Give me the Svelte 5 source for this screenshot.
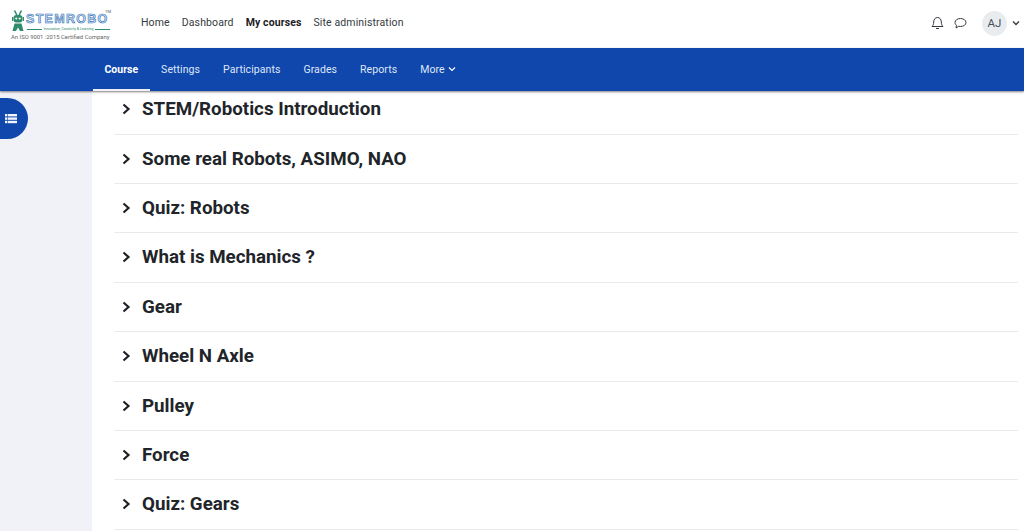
<script>
  const primary = ['Home', 'Dashboard', 'My courses', 'Site administration'];
  const secondary = ['Course', 'Settings', 'Participants', 'Grades', 'Reports'];
  const sections = ['STEM/Robotics Introduction', 'Some real Robots, ASIMO, NAO', 'Quiz: Robots', 'What is Mechanics ?', 'Gear', 'Wheel N Axle', 'Pulley', 'Force', 'Quiz: Gears'];
</script>

<div class="page">
  <header class="top">
    <div class="logo">
      <svg class="robot" viewBox="0 0 12 22" width="12" height="22" aria-hidden="true">
        <path d="M2.500 0.500 4.800 5M9.500 0.500 7.200 5" stroke="#2e8b6b" stroke-width="1.600" fill="none"/>
        <rect x="1.500" y="5" width="9" height="7.500" rx="3" fill="#2e8b6b"/>
        <rect x="0" y="7" width="1.200" height="4" fill="#2e8b6b"/>
        <rect x="10.800" y="7" width="1.200" height="4" fill="#2e8b6b"/>
        <circle cx="4.300" cy="8.500" r="1.100" fill="#fff"/>
        <circle cx="7.700" cy="8.500" r="1.100" fill="#fff"/>
        <path d="M2.500 13.500h7l2 7.500H8L6 17.500 4 21H0.500z" fill="#2e8b6b"/>
      </svg>
      <div class="brand">STEMROBO</div>
      <sup class="tm">TM</sup>
      <div class="tag"><i></i><span>Innovation, Creativity &amp; Learning</span><i></i></div>
      <div class="iso">An ISO 9001 :2015 Certified Company</div>
    </div>
    <nav class="primary">
      {#each primary as p}
        <span class:strong={p === 'My courses'}>{p}</span>
      {/each}
    </nav>
    <div class="tools">
      <svg class="bell" width="13" height="14" viewBox="0 0 13 14" fill="none" stroke="#343a40" stroke-width="1" aria-hidden="true">
        <path d="M1 10.500h11c-1.200-1.300-1.700-2.500-1.700-4.500 0-2.500-1.500-4.500-3.800-4.500S2.700 3.500 2.700 6c0 2-.5 3.200-1.700 4.500z"/>
        <path d="M5 12.500h3"/>
      </svg>
      <svg class="chat" width="13" height="13" viewBox="0 0 13 13" fill="none" stroke="#343a40" stroke-width="1" aria-hidden="true">
        <path d="M6.500 1.500c3 0 5.500 1.700 5.500 4s-2.500 4-5.500 4c-.7 0-1.300-.1-1.900-.2L2 11l.5-2.700C1.500 7.600 1 6.600 1 5.500c0-2.300 2.500-4 5.500-4z"/>
      </svg>
      <div class="avatar">AJ</div>
      <svg class="caret" width="8" height="6" viewBox="0 0 8 6" fill="none" stroke="#343a40" stroke-width="1.300" aria-hidden="true"><path d="M1 1.500 4 4.500 7 1.500"/></svg>
    </div>
  </header>

  <nav class="secondary">
    {#each secondary as s, i}
      <span class="tab" class:active={i === 0}>{s}</span>
    {/each}
    <span class="tab">More
      <svg width="8" height="6" viewBox="0 0 8 6" fill="none" stroke="#fff" stroke-width="1.200" aria-hidden="true"><path d="M1 1.500 4 4.500 7 1.500"/></svg>
    </span>
  </nav>

  <div class="body">
    <aside class="rail">
      <button class="drawer" aria-label="Open course index">
        <svg width="12" height="10" viewBox="0 0 12 10" fill="#f2f5fb" aria-hidden="true">
          <rect x="0" y="0" width="2" height="2.400"/><rect x="2.600" y="0" width="9.400" height="2.400"/>
          <rect x="0" y="3.400" width="2" height="2.400"/><rect x="2.600" y="3.400" width="9.400" height="2.400"/>
          <rect x="0" y="6.800" width="2" height="2.400"/><rect x="2.600" y="6.800" width="9.400" height="2.400"/>
        </svg>
      </button>
    </aside>
    <main class="content">
      {#each sections as s}
        <section class="row">
          <svg width="9" height="12" viewBox="0 0 9 12" fill="none" stroke="#1d2125" stroke-width="2.200" aria-hidden="true"><path d="M1.500 1.500 6.500 6 1.500 10.500"/></svg>
          <h3>{s}</h3>
        </section>
      {/each}
    </main>
  </div>
</div>

<style>
  :global(body) { margin: 0; background: #fff; }
  .page { height: 531px; overflow: hidden; font-family: Roboto, "Liberation Sans", sans-serif; color: #1d2125; display: flex; flex-direction: column; }

  .top { height: 48px; flex: none; display: flex; align-items: center; background: #fff; box-sizing: border-box; padding-bottom: 3px; }
  .logo { position: relative; width: 141px; height: 48px; margin-bottom: -3px; flex: none; }
  .robot { position: absolute; left: 12px; top: 10px; }
  .brand { position: absolute; left: 26px; top: 13px; width: 82px; font-family: "Liberation Sans", sans-serif; font-size: 12.500px; font-weight: 700; line-height: 13px; letter-spacing: 1.300px; color: #cfe0f2; -webkit-text-stroke: 0.600px #2f6fb5; white-space: nowrap; }
  .tm { position: absolute; left: 105px; top: 10px; margin: 0; font-size: 4px; line-height: 4px; color: #555; }
  .tag { position: absolute; left: 27px; top: 27px; width: 83px; display: flex; align-items: center; gap: 2px; font-size: 3.500px; line-height: 5px; color: #2e8b6b; white-space: nowrap; }
  .tag i { flex: 1; height: 1.500px; background: #2e8b6b; }
  .iso { position: absolute; left: 11px; top: 34px; font-size: 5.900px; line-height: 6px; color: #666; white-space: nowrap; }

  .primary { display: flex; gap: 12px; font-size: 10.500px; letter-spacing: 0.120px; color: #343a40; }
  .primary .strong { font-weight: 700; color: #1d2125; }

  .tools { margin-left: auto; display: flex; align-items: center; padding-right: 4px; margin-top: 1px; }
  .chat { margin-left: 10px; margin-top: 1px; }
  .avatar { width: 25px; height: 25px; margin-left: 15px; border-radius: 50%; background: #e9ecef; display: flex; align-items: center; justify-content: center; font-size: 11.500px; color: #495057; }
  .caret { margin-left: 5px; }

  .secondary { height: 43px; flex: none; box-sizing: border-box; background: #0f47ad; box-shadow: 0 1px 2px rgba(0,0,0,.5); display: flex; padding-left: 93px; position: relative; z-index: 1; }
  .tab { padding: 1px 11.500px 0; display: flex; align-items: center; gap: 3px; font-size: 10.500px; letter-spacing: 0.080px; color: #dfe6f5; border-bottom: 2px solid transparent; }
  .tab.active { color: #fff; font-weight: 700; letter-spacing: 0; border-bottom-color: #eef0f4; }

  .body { flex: 1; display: flex; min-height: 0; }
  .rail { width: 92px; flex: none; background: #f0f2f7; padding-top: 7px; box-sizing: border-box; }
  .drawer { width: 28px; height: 41px; border: 0; padding: 0 6px 0 0; background: #0f47ad; border-radius: 0 21px 21px 0; display: flex; align-items: center; justify-content: center; }
  .content { flex: 1; padding: 0 6px 0 22px; margin-top: -5.800px; }
  .row { height: 49.400px; box-sizing: border-box; border-bottom: 1px solid #e8eaed; display: flex; align-items: center; padding: 0 0 0.400px 8px; gap: 11px; }
  .row h3 { margin: 0; font-size: 18.750px; font-weight: 700; line-height: 24px; color: #212529; }
</style>
